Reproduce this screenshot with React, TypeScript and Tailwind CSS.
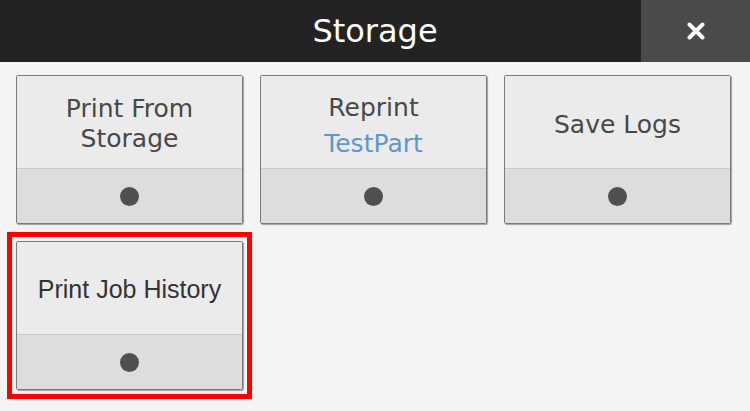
import React from "react";

type Tile = {
  label: string;
  sub?: string;
  font?: "dejavu" | "arial";
  highlight?: boolean;
  pad: string;
};

const tiles: Tile[] = [
  { label: "Print From Storage", pad: "pt-[4px] leading-[30px]" },
  { label: "Reprint", sub: "TestPart", pad: "pt-[8px] leading-[36px]" },
  { label: "Save Logs", pad: "pt-[5px] leading-[29px]" },
  { label: "Print Job History", font: "arial", highlight: true, pad: "pt-[3px] leading-[29px]" },
];

const TileCard: React.FC<{ tile: Tile }> = ({ tile }) => {
  const fontClass =
    tile.font === "arial"
      ? "font-['Liberation_Sans',Arial,sans-serif] text-[25px] text-[#333333]"
      : "font-['DejaVu_Sans',sans-serif] text-[25px] text-[#484848]";

  return (
    <div className="relative">
      {tile.highlight && (
        <span className="pointer-events-none absolute -inset-[9px] border-[5px] border-[#ff0000]" />
      )}
      <button className="flex h-[149px] w-[227px] flex-col overflow-hidden rounded-[2px] border border-[#7a7a7a] text-left shadow-[1px_1px_1px_rgba(0,0,0,0.35)]">
        <div
          className={
            "flex h-[93px] w-full flex-col items-center justify-center border-b border-[#c9c9c9] bg-[#ebebeb] text-center font-normal " +
            fontClass +
            " " +
            tile.pad
          }
        >
          {tile.label === "Print From Storage" ? (
            <>
              <span>Print From</span>
              <span>Storage</span>
            </>
          ) : (
            <span>{tile.label}</span>
          )}
          {tile.sub && <span className="text-[#5f96cc]">{tile.sub}</span>}
        </div>
        <div className="flex w-full flex-1 items-center justify-center bg-[#dddddd]">
          <div className="h-[19px] w-[19px] rounded-full bg-[#505050]" />
        </div>
      </button>
    </div>
  );
};

const App: React.FC = () => {
  return (
    <div className="h-[411px] w-[750px] overflow-hidden bg-[#f4f4f4]">
      <div className="relative flex h-[62px] items-center justify-center bg-[#232323]">
        <h1 className="font-['DejaVu_Sans',sans-serif] text-[32px] font-normal text-white">
          Storage
        </h1>
        <button className="absolute right-0 top-0 flex h-full w-[109px] items-center justify-center bg-[#4a4a4a]">
          <svg width="18" height="18" viewBox="0 0 18 18">
            <path
              d="M2.5 2.5 L15.5 15.5 M15.5 2.5 L2.5 15.5"
              stroke="#ffffff"
              strokeWidth="4"
              strokeLinecap="round"
            />
          </svg>
        </button>
      </div>
      <div className="grid grid-cols-[227px_227px_227px] gap-x-[17px] gap-y-[17px] pl-[16px] pt-[13px]">
        {tiles.map((t) => (
          <TileCard key={t.label} tile={t} />
        ))}
      </div>
    </div>
  );
};

export default App;
